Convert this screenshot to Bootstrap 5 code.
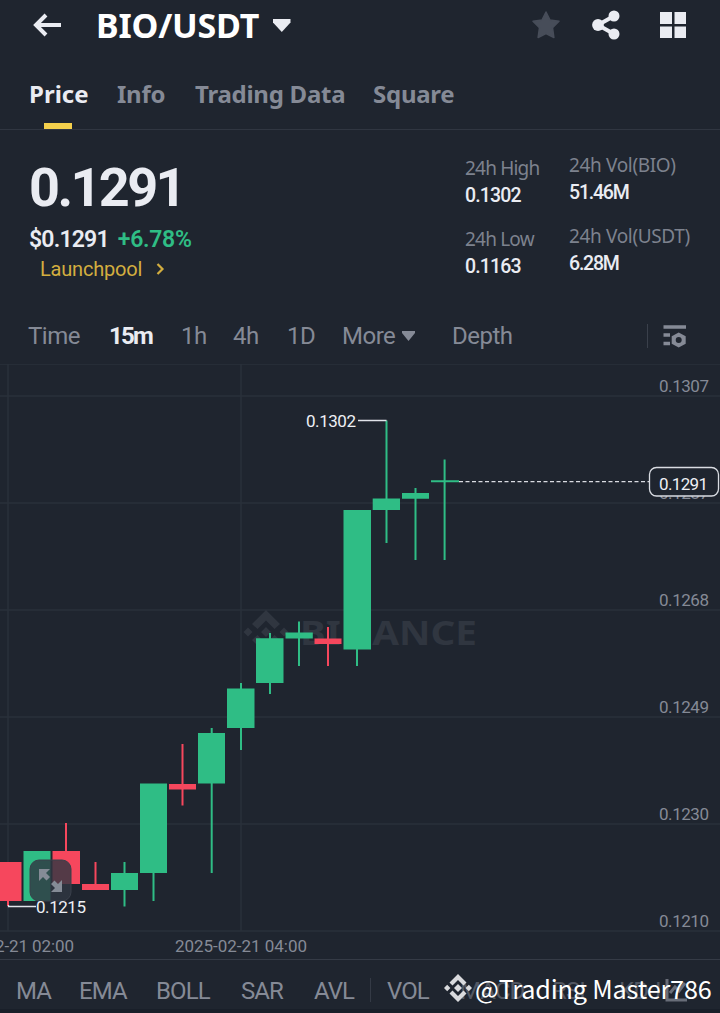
<!DOCTYPE html>
<html lang="en">
<head>
<meta charset="utf-8">
<meta name="viewport" content="width=device-width, initial-scale=1">
<title>BIO/USDT</title>
<link href="https://cdn.jsdelivr.net/npm/bootstrap@5.3.0/dist/css/bootstrap.min.css" rel="stylesheet">
<style>
  :root { --ink:#eaecf2; --dim:#858a96; --line:#2d343f; --up:#2fbd85; --down:#f6475d; }
  body { background:#1f252f; color:var(--ink); font-family:Roboto,"Liberation Sans",sans-serif; width:720px; height:1013px; overflow:hidden; }
  svg { display:block; }
  .topbar { height:50px; padding:0 33px 0 32px; }
  .pair { font:700 34px/50px "Noto Sans",sans-serif; letter-spacing:-.2px; color:#fff; margin-left:32px; width:177px; white-space:nowrap; }
  .tabs { height:80px; padding-left:29px; border-bottom:1px solid #303641; display:grid; grid-template-columns:88px 78px 178px auto; font:700 24px/87px "Noto Sans",sans-serif; color:var(--dim); white-space:nowrap; letter-spacing:-.25px; }
  .tab-on { color:var(--ink); letter-spacing:0; }
  .tab-on::after { content:""; display:block; width:28px; height:6px; margin:-14px 0 0 15px; background:#f4d04c; }
  .summary { height:177px; padding:30px 0 0 29px; }
  .quote { width:436px; }
  .last { font-size:54px; line-height:56px; font-weight:700; letter-spacing:-2.6px; }
  .sub { font-size:23px; line-height:30px; font-weight:600; margin:9px 0 -1px; letter-spacing:-.8px; }
  .up { color:var(--up); letter-spacing:-.3px; padding-left:1px; }
  .pool { font-size:20px; line-height:30px; color:#d3ae3f; margin-left:11px; letter-spacing:-.2px; }
  .stat { font:400 19px/28px "Noto Sans",sans-serif; color:#7d828e; letter-spacing:-.35px; white-space:nowrap; }
  .stat b { display:block; font:500 19.5px/28px Roboto,sans-serif; color:var(--ink); letter-spacing:-.85px; margin-bottom:15px; }
  .stats-a { width:104px; margin-top:-6px; letter-spacing:-.8px; }
  .stats-b { margin-top:-9px; }
  .stats-b b { letter-spacing:-1.2px; }
  .frames { height:57px; padding-left:28px; display:grid; grid-template-columns:81px 72px 52px 54px 55px 110px 195px auto; font-size:24px; line-height:58px; color:var(--dim); letter-spacing:-.5px; }
  .frames .on { color:var(--ink); font-weight:700; letter-spacing:-1.8px; }
  .settings { border-left:1px solid #3a404b; height:24px; margin-top:17px; padding-left:15px; }
  .chart text { font-family:Roboto,sans-serif; font-size:17px; fill:var(--dim); }
  .inds { height:54px; padding-left:16px; border-top:1px solid #353b46; border-bottom:4px solid #191f29; display:grid; grid-template-columns:63px 77px 85px 73px 56px 17px 73px 92px 67px auto; font-size:24px; line-height:63px; color:var(--dim); letter-spacing:-.9px; position:relative; white-space:nowrap; }
  .sep { border-left:1px solid #343a45; height:24px; margin-top:18px; }
  .credit { position:absolute; left:444px; top:7px; color:#fff; font:400 25.2px/42px "Noto Sans CJK SC",sans-serif; letter-spacing:-.15px; }
</style>
</head>
<body>
<header class="topbar d-flex align-items-center">
  <svg width="32" height="28" viewBox="0 0 32 28" fill="none" stroke="#eaecf2" stroke-width="4"><path d="M29 14H4M14 4L4 14l10 10"/></svg>
  <div class="pair">BIO/USDT</div>
  <svg width="18" height="16" viewBox="0 0 18 16" fill="#eaecf2"><path d="M0 2h17.500V5.500L8.800 15 0 5.500z"/></svg>
  <div class="d-flex align-items-center ms-auto">
    <svg width="30" height="32" viewBox="0 0 30 32" fill="#474d59" stroke="#474d59" stroke-width="1.500" stroke-linejoin="round"><path d="M15 3l4 8 9 1.200-6.500 6.500 1.400 9.800L15 24.500l-7.900 4 1.400-9.800L2 12.200 11 11z"/></svg>
    <svg style="margin-left:30px" width="30" height="30" viewBox="0 0 30 30" fill="#eaecf2"><path d="M23 6L7 15l16 9" fill="none" stroke="#eaecf2" stroke-width="4"/><circle cx="23" cy="6" r="5.500"/><circle cx="7" cy="15" r="5.900"/><circle cx="23" cy="24" r="5.500"/></svg>
    <svg style="margin-left:39px" width="27" height="27" viewBox="0 0 27 27" fill="#eaecf2"><path d="M0 0h12v12H0zM14.500 0h11.500v12H14.500zM0 14.500h12v11.500H0zM14.500 14.500h11.500v11.500H14.500z"/></svg>
  </div>
</header>
<nav class="tabs"><span class="tab-on">Price</span><span>Info</span><span>Trading Data</span><span>Square</span></nav>
<section class="summary d-flex">
  <div class="quote">
    <div class="last">0.1291</div>
    <div class="sub d-flex"><span class="usd">$0.1291</span><span class="up ms-2">+6.78%</span></div>
    <div class="pool d-flex align-items-center"><span>Launchpool</span>
      <svg style="margin-left:14px" width="9" height="12" viewBox="0 0 9 12" fill="none" stroke="#d3ae3f" stroke-width="2.200"><path d="M1.500 1L6.500 6l-5 5"/></svg></div>
  </div>
  <div class="stats-a stat">24h High<b>0.1302</b>24h Low<b>0.1163</b></div>
  <div class="stats-b stat">24h Vol(BIO)<b>51.46M</b>24h Vol(USDT)<b>6.28M</b></div>
</section>
<nav class="frames">
  <span>Time</span><span class="on">15m</span><span>1h</span><span>4h</span><span>1D</span>
  <span class="d-flex align-items-center">More<svg style="margin-left:7px" width="13" height="10" viewBox="0 0 13 10" fill="#858a96"><path d="M0 0h13v2L6.500 10 0 2z"/></svg></span>
  <span>Depth</span>
  <span class="settings"><svg width="25" height="24" viewBox="0 0 25 24"><path d="M.5 3h22.500M.5 11h6.500M.5 19.500h6.500" stroke="#858a96" stroke-width="3.300" fill="none"/><path d="M15.700 8.500l7 3.800v7.400l-7 3.800-7-3.800v-7.400z" fill="#858a96"/><circle cx="15.700" cy="16" r="3" fill="#1f252f"/></svg></span>
</nav>
<svg class="chart" width="720" height="595" viewBox="0 364 720 595">
  <path d="M0 364H720M0 396H720M0 503H720M0 610H720M0 717H720M0 824H720M0 931H720M8 364V931M241 364V931" stroke="#2a303b" stroke-width="1.500" fill="none"/>
  <g fill="#303640">
    <path d="M266 610l14 14-5.500 5-8.500-8.500-8.500 8.500-5.500-5zM248 627.500l4.500 4.500-4.500 4.500-4.500-4.500zM266 627l5 5-5 5-5-5zM284 627.500l4.500 4.500-4.500 4.500-4.500-4.500zM252 640l5.500-5 8.500 8.500 8.500-8.500 5.500 5-14 14z"/>
    <text x="300" y="645" textLength="177" lengthAdjust="spacingAndGlyphs" style="font:700 34px 'Noto Sans',sans-serif;fill:#303640">BINANCE</text>
  </g>
  <g fill="#f6475d" stroke="none">
    <path d="M0 862H21.500V901H0zM7 900h2v6H7zM52.500 851H80V884H52.500zM65 823h2v29h-2zM82 884h27v6H82zM94.500 862h2v23h-2zM169 784h27v5.500h-27zM181.500 744h2v61.500h-2zM314.500 638.500h27v5.500h-27zM327 627h2v39h-2z"/>
  </g>
  <path fill="#2fbd85" d="M23.500 851h27v50h-27zM111 873h27v17h-27zM123.500 862h2v44.500h-2zM140 783.500h27V873h-27zM152.500 872h2v29h-2zM198 733h27v50.500h-27zM210.700 728h2v145h-2zM227 688.500h27.500V728H227zM240 683h2v67h-2zM256 638.300h27.500V683H256zM269 633h2v61h-2zM285.500 632.500h27.300v6h-27.300zM298 621.500h2V666h-2zM343.500 510H371V649.500H343.500zM356 649h2v17h-2zM372.700 498.500H400v11.500h-27.300zM385.500 420.500h2V543h-2zM402 493h27v5.800h-27zM414.500 488h2v72h-2zM431 480.200h28v2h-28zM443.600 459.500h2V560h-2z"/>
  <path d="M358 420.500h28.500M8.500 905v1.500H36" stroke="#e1e4ea" stroke-width="1.300" fill="none"/>
  <path d="M459 481.700H649" stroke="#d9dce2" stroke-width="1.300" stroke-dasharray="4 2.500"/>
  <g>
    <text x="659" y="392" textLength="50">0.1307</text><text x="659" y="499" textLength="50">0.1287</text><text x="659" y="606" textLength="50">0.1268</text><text x="659" y="713" textLength="50">0.1249</text><text x="659" y="820" textLength="50">0.1230</text><text x="659" y="927" textLength="50">0.1210</text>
    <text x="-57" y="952" textLength="131">2025-02-21 02:00</text><text x="175" y="952" textLength="132">2025-02-21 04:00</text>
  </g>
  <rect x="649.500" y="467.500" width="69" height="28.500" rx="7" fill="#1f252f" stroke="#d9dce2" stroke-width="1.300"/>
  <g style="--dim:#eef0f5"><text x="659" y="490" textLength="49">0.1291</text><text x="306" y="427" textLength="50">0.1302</text></g>
  <rect x="30" y="860" width="41" height="41" rx="9" fill="#303742" fill-opacity=".82" stroke="#3a404b"/>
  <path d="M39 869h11l-4 4 4 4-3.500 3.500L43 877l-4 4zM62 892H51l4-4-4-4 3.500-3.500L58 884l4-4z" fill="#858b96"/>
  <text x="36" y="913" textLength="50" style="fill:#eef0f5">0.1215</text>
</svg>
<footer class="inds">
  <span>MA</span><span>EMA</span><span>BOLL</span><span>SAR</span><span>AVL</span><span class="sep"></span><span>VOL</span><span class="opacity-50">MACD</span><span class="opacity-50">RSI</span>
  <span class="d-flex opacity-50">KDJ<svg style="margin:19px 0 0 5px" width="22" height="23" viewBox="0 0 22 23" fill="none" stroke="#b0b4c0" stroke-width="3"><path d="M2 0v21h20M5 14l5-6 4 4 6-8"/></svg></span>
  <div class="credit d-flex align-items-center"><svg width="28" height="28" viewBox="0 0 28 28" fill="#d9dadd"><path d="M14 0l8.500 8.500-3 3L14 6l-5.500 5.500-3-3zM14 28l8.500-8.500-3-3L14 22l-5.500-5.500-3 3zM3.200 10.800L6.400 14l-3.200 3.200L0 14zM24.800 10.800L28 14l-3.200 3.200L21.600 14zM14 10l4 4-4 4-4-4z"/></svg><span class="handle" style="margin-left:3px">@Trading Master786</span></div>
</footer>
<script src="https://cdn.jsdelivr.net/npm/bootstrap@5.3.0/dist/js/bootstrap.bundle.min.js"></script>
</body>
</html>
